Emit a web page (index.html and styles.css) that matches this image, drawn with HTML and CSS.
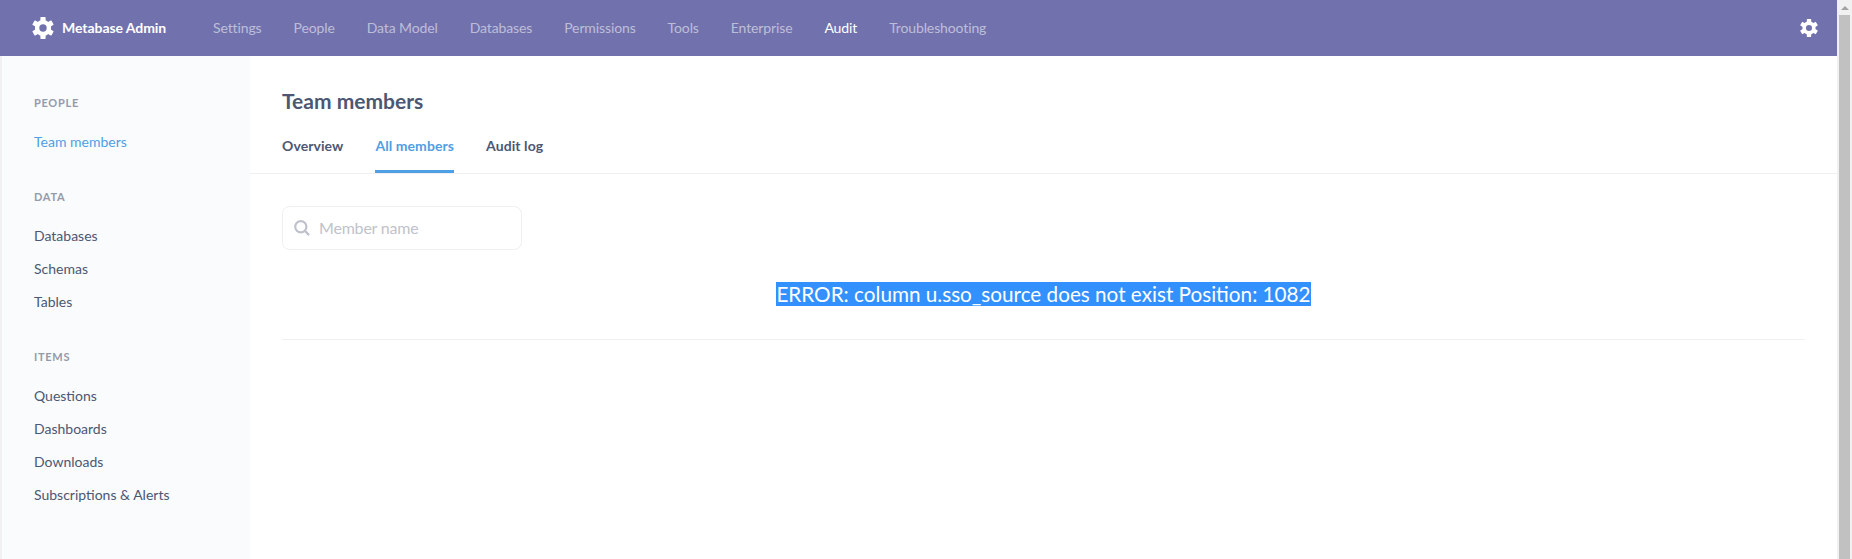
FILE: index.html
```html
<!DOCTYPE html>
<html lang="en">
<head>
<meta charset="utf-8">
<title>Metabase Admin</title>
<link rel="stylesheet" href="styles.css">
</head>
<body>
<div class="viewport">
  <div class="app">
    <header class="topbar">
      <a class="brand">
        <svg class="gear gear-brand" viewBox="0 0 16 16"><g><rect x="6.1" y="0" width="3.8" height="16" rx=".5"/><rect x="6.1" y="0" width="3.8" height="16" rx=".5" transform="rotate(60 8 8)"/><rect x="6.1" y="0" width="3.8" height="16" rx=".5" transform="rotate(120 8 8)"/><circle cx="8" cy="8" r="5.9"/></g><circle class="gear-hole" cx="8" cy="8" r="2.7"/></svg>
        <span class="brand-name">Metabase Admin</span>
      </a>
      <nav class="topnav">
        <a class="topnav-item">Settings</a>
        <a class="topnav-item">People</a>
        <a class="topnav-item">Data Model</a>
        <a class="topnav-item">Databases</a>
        <a class="topnav-item">Permissions</a>
        <a class="topnav-item">Tools</a>
        <a class="topnav-item">Enterprise</a>
        <a class="topnav-item active">Audit</a>
        <a class="topnav-item">Troubleshooting</a>
      </nav>
      <svg class="gear gear-right" viewBox="0 0 16 16"><g><rect x="6.1" y="0" width="3.8" height="16" rx=".5"/><rect x="6.1" y="0" width="3.8" height="16" rx=".5" transform="rotate(60 8 8)"/><rect x="6.1" y="0" width="3.8" height="16" rx=".5" transform="rotate(120 8 8)"/><circle cx="8" cy="8" r="5.9"/></g><circle class="gear-hole" cx="8" cy="8" r="2.7"/></svg>
    </header>
    <div class="body">
      <aside class="sidebar">
        <section class="side-group">
          <h4 class="side-title">PEOPLE</h4>
          <a class="side-link current">Team members</a>
        </section>
        <section class="side-group">
          <h4 class="side-title">DATA</h4>
          <a class="side-link">Databases</a>
          <a class="side-link">Schemas</a>
          <a class="side-link">Tables</a>
        </section>
        <section class="side-group">
          <h4 class="side-title">ITEMS</h4>
          <a class="side-link">Questions</a>
          <a class="side-link">Dashboards</a>
          <a class="side-link">Downloads</a>
          <a class="side-link">Subscriptions &amp; Alerts</a>
        </section>
      </aside>
      <main class="main">
        <div class="page-head">
          <h2 class="page-title">Team members</h2>
          <div class="tabs">
            <a class="tab">Overview</a>
            <a class="tab selected">All members</a>
            <a class="tab">Audit log</a>
          </div>
        </div>
        <div class="content">
          <div class="search">
            <svg class="search-icon" viewBox="0 0 16 16"><circle cx="6.8" cy="6.8" r="5.6"/><path d="M10.9 10.9l4.2 4.2"/></svg>
            <span class="search-text">Member name</span>
          </div>
          <div class="error-wrap"><span class="error-text">ERROR: column u.sso_source does not exist Position: 1082</span></div>
          <hr class="rule">
        </div>
      </main>
    </div>
  </div>
  <div class="scrollbar">
    <div class="scroll-btn"><i class="arrow"></i></div>
    <div class="scroll-thumb"></div>
  </div>
</div>
</body>
</html>
```
FILE: styles.css
```css
* { box-sizing: border-box; }
html, body { margin: 0; height: 100%; overflow: hidden; }
body { font-family: Lato, "Noto Sans", sans-serif; color: #4c5773; background: #fff; }
.viewport { display: flex; height: 559px; }
.app { flex: 1; min-width: 0; display: flex; flex-direction: column; }
.topbar { height: 56px; background: #7172ad; display: flex; align-items: center; padding: 0 19px 0 32px; flex: none; }
.gear { fill: #fff; flex: none; }
.gear-hole { fill: #7172ad; }
.gear-brand { width: 22px; height: 22px; }
.gear-right { width: 18px; height: 18px; margin-left: auto; }
.brand { display: flex; align-items: center; gap: 8px; color: #fff; font-size: 14px; font-weight: 700; width: 181px; flex: none; }
.brand-name { padding-bottom: 2px; letter-spacing: -.06px; }
.topnav { display: flex; gap: 32px; padding-bottom: 2px; }
.topnav-item { font-size: 14px; letter-spacing: -.12px; color: rgba(255,255,255,.55); }
.topnav-item.active { color: #fff; }
.body { flex: 1; display: flex; min-height: 0; }
.sidebar { width: 250px; flex: none; background: #f9fbfc; border-left: 2px solid #f0f0f3; padding: 40px 0 0 32px; }
.side-group { margin-bottom: 32px; }
.side-title { margin: 0 0 15px; font-size: 11px; line-height: 14px; font-weight: 700; letter-spacing: .7px; color: #949aab; }
.side-link { display: block; font-size: 14px; line-height: 33px; color: #4c5773; }
.side-link.current { color: #509ee3; }
.main { flex: 1; min-width: 0; }
.page-head { border-bottom: 1px solid #f0f0f3; height: 118px; padding: 33px 0 0 32px; }
.page-title { margin: 0; font-size: 21px; line-height: 24px; font-weight: 700; color: #4c5773; }
.tabs { display: flex; gap: 32px; margin-top: 12px; }
.tab { display: block; height: 48px; line-height: 42px; font-size: 14px; font-weight: 700; letter-spacing: .08px; color: #4c5773; border-bottom: 3px solid transparent; }
.tab.selected { color: #509ee3; border-bottom-color: #509ee3; }
.content { padding: 32px 32px 0; }
.search { width: 240px; height: 44px; border: 1px solid #f0f0f3; border-radius: 8px; display: flex; align-items: center; padding-left: 11px; gap: 9px; }
.search-icon { width: 16px; height: 16px; fill: none; stroke: #bfc2cc; stroke-width: 2.2; flex: none; }
.search-text { font-size: 16px; letter-spacing: -.2px; color: #bfc2cc; padding-bottom: 2px; }
.error-wrap { text-align: center; margin-top: 32px; height: 57px; font-size: 20.7px; line-height: 25px; }
.error-text { color: #fff; background: #3390ff; }
.rule { margin: 0; border: 0; border-top: 1px solid #f0f0f3; }
.scrollbar { width: 15px; flex: none; background: #f1f1f1; display: flex; flex-direction: column; padding: 0 2px; }
.scroll-btn { height: 15px; display: flex; align-items: center; justify-content: center; flex: none; }
.arrow { width: 0; height: 0; border-left: 4px solid transparent; border-right: 4px solid transparent; border-bottom: 4px solid #a3a3a3; }
.scroll-thumb { flex: 1; background: #c1c1c1; }
```
